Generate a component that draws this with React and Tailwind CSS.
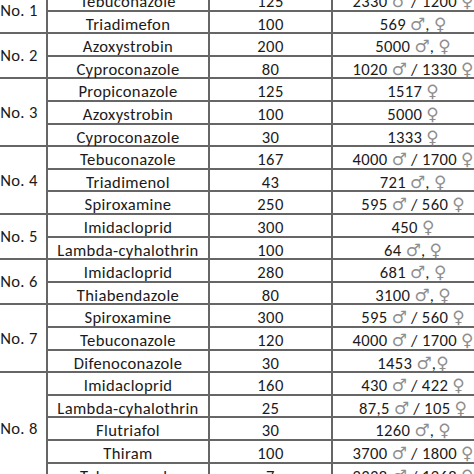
const groups = [
  { label: 'No. 1', rows: [
    ['Tebuconazole', '125', '2330 ♂ / 1200 ♀'],
    ['Triadimefon', '100', '569 ♂, ♀'],
  ] },
  { label: 'No. 2', rows: [
    ['Azoxystrobin', '200', '5000 ♂, ♀'],
    ['Cyproconazole', '80', '1020 ♂ / 1330 ♀'],
  ] },
  { label: 'No. 3', rows: [
    ['Propiconazole', '125', '1517 ♀'],
    ['Azoxystrobin', '100', '5000 ♀'],
    ['Cyproconazole', '30', '1333 ♀'],
  ] },
  { label: 'No. 4', rows: [
    ['Tebuconazole', '167', '4000 ♂ / 1700 ♀'],
    ['Triadimenol', '43', '721 ♂, ♀'],
    ['Spiroxamine', '250', '595 ♂ / 560 ♀'],
  ] },
  { label: 'No. 5', rows: [
    ['Imidacloprid', '300', '450 ♀'],
    ['Lambda-cyhalothrin', '100', '64 ♂, ♀'],
  ] },
  { label: 'No. 6', rows: [
    ['Imidacloprid', '280', '681 ♂, ♀'],
    ['Thiabendazole', '80', '3100 ♂, ♀'],
  ] },
  { label: 'No. 7', rows: [
    ['Spiroxamine', '300', '595 ♂ / 560 ♀'],
    ['Tebuconazole', '120', '4000 ♂ / 1700 ♀'],
    ['Difenoconazole', '30', '1453 ♂,♀'],
  ] },
  { label: 'No. 8', rows: [
    ['Imidacloprid', '160', '430 ♂ / 422 ♀'],
    ['Lambda-cyhalothrin', '25', '87,5 ♂ / 105 ♀'],
    ['Flutriafol', '30', '1260 ♂, ♀'],
    ['Thiram', '100', '3700 ♂ / 1800 ♀'],
    ['Tebuconazole', '7', '2338 ♂ / 1268 ♀'],
  ] },
]

// gender glyphs are lighter and thinner in the source table
function Dose({ text }) {
  return text.split(/([♂♀])/).map((part, i) =>
    part === '♂' || part === '♀'
      ? <span key={i} className="text-[#8e8e8e] font-['DejaVu_Sans',sans-serif] text-[17px] leading-none tracking-normal">{part}</span>
      : <span key={i} className="whitespace-pre">{part}</span>
  )
}

export default function App() {
  return (
    <div className="w-[474px] h-[474px] overflow-hidden bg-white text-[#1a1a1a] font-['Carlito','Lato',sans-serif] text-[16.6px] tracking-[0.35px]">
      <div className="-mt-[10.9px] -ml-[8px] w-[510px]">
        {groups.map(g => (
          <div key={g.label} className="flex">
            <div className="w-[56px] shrink-0 flex items-center justify-center border-r-2 border-b-2 border-[#666]">
              {g.label}
            </div>
            <div className="flex-1 flex flex-col">
              {g.rows.map((r, i) => (
                <div key={i} className="h-[22.6px] grid grid-cols-[162px_123px_1fr] border-b-2 border-[#666]">
                  <div className="flex items-center justify-center border-r-2 border-[#666] whitespace-nowrap">{r[0]}</div>
                  <div className="flex items-center justify-center border-r-2 border-[#666]">{r[1]}</div>
                  <div className="flex items-center justify-center whitespace-nowrap w-[160px]"><Dose text={r[2]} /></div>
                </div>
              ))}
            </div>
          </div>
        ))}
      </div>
    </div>
  )
}
